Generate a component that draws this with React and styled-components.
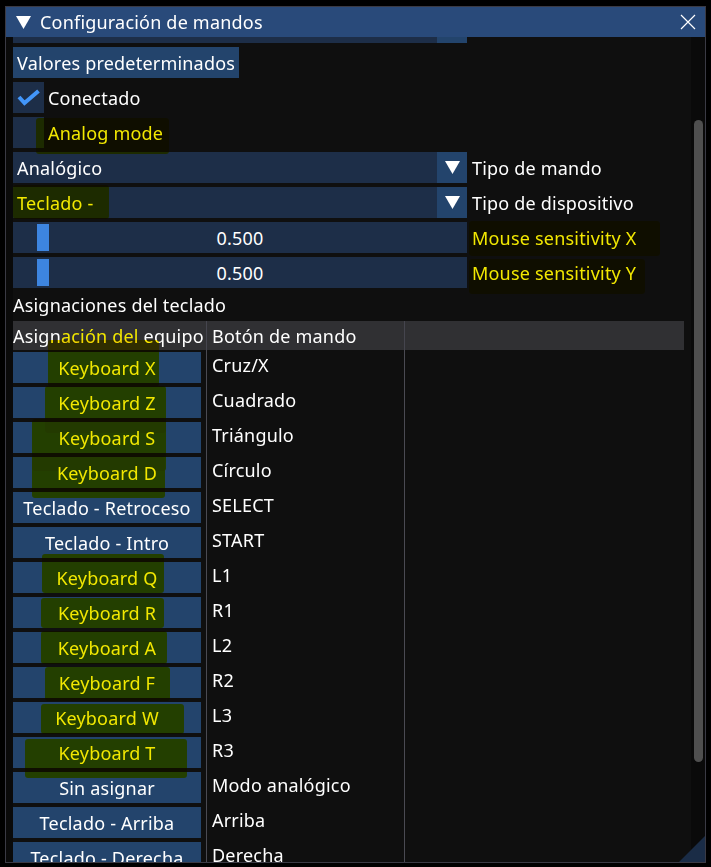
import React from 'react';
import styled, { createGlobalStyle } from 'styled-components';

const GlobalStyle = createGlobalStyle`
  html, body {
    margin: 0;
    background: #000;
  }
  body {
    font-family: "Noto Sans", "Open Sans", sans-serif;
    font-size: 18px;
    letter-spacing: 0.2px;
    color: #fff;
  }
`;

const YELLOW = '#f2e800';

const bindings = [
    { key: 'Keyboard X', pad: 'Cruz/X', hl: [10, 3, 16, 6] },
    { key: 'Keyboard Z', pad: 'Cuadrado', hl: [13, 10, 5, 17] },
    { key: 'Keyboard S', pad: 'Triángulo', hl: [27, 11, 7, 20] },
    { key: 'Keyboard D', pad: 'Círculo', hl: [25, 8, 5, 12] },
    { key: 'Teclado - Retroceso', pad: 'SELECT' },
    { key: 'Teclado - Intro', pad: 'START' },
    { key: 'Keyboard Q', pad: 'L1', hl: [14, 6, 12, 2] },
    { key: 'Keyboard R', pad: 'R1', hl: [17, 8, 3, 2] },
    { key: 'Keyboard A', pad: 'L2', hl: [17, 11, 5, 3] },
    { key: 'Keyboard F', pad: 'R2', hl: [14, 15, 4, 5] },
    { key: 'Keyboard W', pad: 'L3', hl: [14, 25, 2, 3] },
    { key: 'Keyboard T', pad: 'R3', hl: [33, 31, 2, 12] },
    { key: 'Sin asignar', pad: 'Modo analógico' },
    { key: 'Teclado - Arriba', pad: 'Arriba' },
    { key: 'Teclado - Derecha', pad: 'Derecha' },
];

// yellow text with a marker-like blob behind it
const Marked = ({ hl = [0, 0, 0, 0], children }) => (
    <Mark $l={hl[0]} $r={hl[1]} $t={hl[2]} $b={hl[3]}>
        <MarkText>{children}</MarkText>
    </Mark>
);

const Triangle = ({ size = 15 }) => (
    <svg width={size} height={size - 2} viewBox="0 0 15 13">
        <path d="M0 0 L15 0 L7.5 13 Z" fill="#fff" />
    </svg>
);

const Combo = ({ value, label, hl }) => (
    <Row>
        <Frame>
            <Field>{hl ? <Marked hl={hl}>{value}</Marked> : value}</Field>
            <ArrowBox><Triangle /></ArrowBox>
        </Frame>
        <Label>{label}</Label>
    </Row>
);

const Slider = ({ value, label, hl }) => (
    <Row>
        <SliderFrame>
            <Grab />
            {value}
        </SliderFrame>
        <Label><Marked hl={hl}>{label}</Marked></Label>
    </Row>
);

const Checkbox = ({ checked, children }) => (
    <Row>
        <Box>
            {checked && (
                <svg width="31" height="31" viewBox="0 0 31 31">
                    <polyline points="6,15 11.5,21 25.5,9" fill="none" stroke="#4296fa" strokeWidth="4" />
                </svg>
            )}
        </Box>
        <CheckLabel>{children}</CheckLabel>
    </Row>
);

const App = () => {
    return (
        <>
            <GlobalStyle />
            <Window>
                <TitleBar>
                    <Triangle />
                    <Title>Configuración de mandos</Title>
                    <Close>
                        <svg width="16" height="16" viewBox="0 0 16 16">
                            <path d="M1 1 L15 15 M15 1 L1 15" stroke="#fff" strokeWidth="1.2" />
                        </svg>
                    </Close>
                </TitleBar>
                <Body>
                    <Content>
                        <CutRow>
                            <Frame>
                                <Field />
                                <ArrowBox />
                            </Frame>
                        </CutRow>
                        <Button>Valores predeterminados</Button>
                        <Checkbox checked>Conectado</Checkbox>
                        <Checkbox><Marked hl={[12, 6, 3, 8]}>Analog mode</Marked></Checkbox>
                        <Combo value="Analógico" label="Tipo de mando" />
                        <Combo value="Teclado -" label="Tipo de dispositivo" hl={[4, 15, 6, 3]} />
                        <Slider value="0.500" label="Mouse sensitivity X" hl={[3, 23, 5, 5]} />
                        <Slider value="0.500" label="Mouse sensitivity Y" hl={[3, 9, 2, 8]} />
                        <Section>Asignaciones del teclado</Section>
                        <Table>
                            <HeadCell>Asign<Yellow>ación del</Yellow> equipo</HeadCell>
                            <HeadCell $pad>Botón de mando</HeadCell>
                            <HeadCell $last />
                            {bindings.map((b) => (
                                <React.Fragment key={b.pad}>
                                    <KeyCell>
                                        <KeyButton>
                                            {b.hl ? <Marked hl={b.hl}>{b.key}</Marked> : b.key}
                                        </KeyButton>
                                    </KeyCell>
                                    <PadCell>{b.pad}</PadCell>
                                    <EmptyCell />
                                </React.Fragment>
                            ))}
                        </Table>
                    </Content>
                    <Scrollbar>
                        <Thumb />
                    </Scrollbar>
                    <Grip />
                </Body>
            </Window>
        </>
    );
};

export default App;

const Window = styled.div`
    margin: 6px 0 0 5px;
    width: 701px;
    height: 857px;
    box-sizing: border-box;
    border: 1px solid #3a3a44;
    background: #0f0f0f;
    display: flex;
    flex-direction: column;
    overflow: hidden;
`

const TitleBar = styled.div`
    height: 30px;
    flex: none;
    background: #294a7a;
    display: flex;
    align-items: center;
    padding: 0 9px 0 10px;
    gap: 9px;
`

const Title = styled.span`
    flex: 1;
    line-height: 30px;
    white-space: nowrap;
`

const Close = styled.div`
    display: flex;
    align-items: center;
`

const Body = styled.div`
    position: relative;
    flex: 1;
    display: flex;
    min-height: 0;
`

const Content = styled.div`
    flex: 1;
    border-left: 7px solid #0a0a0a;
    padding-right: 7px;
    display: flex;
    flex-direction: column;
    gap: 4px;
    overflow: hidden;
    min-width: 0;
`

const Scrollbar = styled.div`
    width: 14px;
    flex: none;
    background: #0a0a0a;
    padding: 83px 2px 0 3px;
    box-sizing: border-box;
`

const Thumb = styled.div`
    width: 9px;
    height: 642px;
    border-radius: 5px;
    background: #4f4f4f;
`

const Grip = styled.div`
    position: absolute;
    right: 0;
    bottom: 0;
    width: 26px;
    height: 26px;
    background: #1a2c46;
    clip-path: polygon(100% 0, 100% 100%, 0 100%);
`

const Row = styled.div`
    display: flex;
    align-items: center;
    height: 31px;
    flex: none;
`

const CutRow = styled(Row)`
    margin-top: -25px;
`

const Frame = styled.div`
    width: 454px;
    height: 31px;
    display: flex;
    flex: none;
`

const Field = styled.div`
    flex: 1;
    background: #1d2e48;
    padding: 0 4px;
    line-height: 33px;
    overflow: visible;
`

const ArrowBox = styled.div`
    width: 30px;
    background: #23446c;
    display: flex;
    align-items: center;
    justify-content: center;
`

const Label = styled.div`
    padding: 2px 0 0 5px;
    line-height: 31px;
    white-space: nowrap;
`

const SliderFrame = styled.div`
    position: relative;
    width: 454px;
    height: 31px;
    flex: none;
    background: #1d2e48;
    line-height: 33px;
    text-align: center;
`

const Grab = styled.div`
    position: absolute;
    left: 24px;
    top: 2px;
    width: 12px;
    height: 27px;
    background: #3d85e0;
`

const Button = styled.div`
    align-self: flex-start;
    height: 31px;
    line-height: 33px;
    padding: 0 4px;
    background: #23446c;
    white-space: nowrap;
    flex: none;
`

const Box = styled.div`
    width: 31px;
    height: 31px;
    flex: none;
    background: #1d2e48;
`

const CheckLabel = styled.div`
    padding: 2px 0 0 4px;
    line-height: 31px;
`

const Section = styled.div`
    line-height: 27px;
    height: 25px;
    flex: none;
`

const Table = styled.div`
    display: grid;
    grid-template-columns: 194px 198px 1fr;
    grid-auto-rows: 35px;
    grid-template-rows: 29px;
    flex: none;
`

const HeadCell = styled.div`
    background: #303033;
    line-height: 31px;
    height: 29px;
    white-space: nowrap;
    padding-left: ${(p) => (p.$pad ? '5px' : '0')};
    border-right: ${(p) => (p.$last ? 'none' : '1px solid #45454e')};
`

const Yellow = styled.span`
    color: ${YELLOW};
`

const KeyCell = styled.div`
    padding-top: 2px;
    border-right: 1px solid #4a4a52;
`

const KeyButton = styled.div`
    width: 188px;
    height: 31px;
    line-height: 33px;
    background: #23446c;
    text-align: center;
    white-space: nowrap;
`

const PadCell = styled.div`
    padding: 2px 0 0 5px;
    line-height: 27px;
    border-right: 1px solid #4a4a52;
    white-space: nowrap;
`

const EmptyCell = styled.div``

const Mark = styled.span`
    position: relative;
    display: inline-block;
    line-height: 25px;
    color: ${YELLOW};
    &::before {
        content: '';
        position: absolute;
        left: ${(p) => -p.$l}px;
        right: ${(p) => -p.$r}px;
        top: ${(p) => -p.$t}px;
        bottom: ${(p) => -p.$b}px;
        background: #ffeb00;
        mix-blend-mode: multiply;
        border-radius: 3px;
    }
`

const MarkText = styled.span`
    position: relative;
`
